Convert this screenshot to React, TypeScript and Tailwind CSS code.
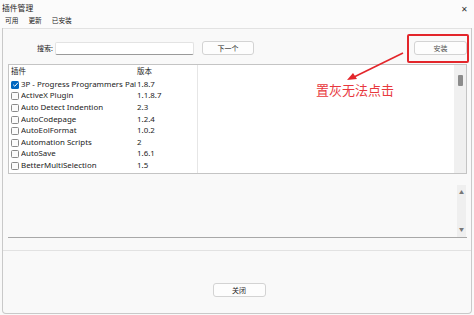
import React from "react";

const plugins: [string, string, boolean][] = [
  ["3P - Progress Programmers Pal", "1.8.7", true],
  ["ActiveX Plugin", "1.1.8.7", false],
  ["Auto Detect Indention", "2.3", false],
  ["AutoCodepage", "1.2.4", false],
  ["AutoEolFormat", "1.0.2", false],
  ["Automation Scripts", "2", false],
  ["AutoSave", "1.6.1", false],
  ["BetterMultiSelection", "1.5", false],
  ["BracketsCheck", "1.2.2", false],
];

function Check({ on }: { on: boolean }) {
  return on ? (
    <span className="block w-[8px] h-[8px] rounded-[1.5px] bg-[#0067c0] flex items-center justify-center shrink-0">
      <svg width="7" height="7" viewBox="0 0 8 8">
        <path d="M1.3 4.2 L3.2 6 L6.8 2" stroke="#fff" strokeWidth="1.1" fill="none" />
      </svg>
    </span>
  ) : (
    <span className="block w-[8px] h-[8px] rounded-[1.5px] border border-[#8a8a8a] bg-[#fbfbfb] shrink-0" />
  );
}

export default function App() {
  return (
    <div
      className="w-[474px] h-[315px] bg-[#f9f9f9] relative flex flex-col overflow-hidden text-[#1b1b1b]"
      style={{ fontFamily: '"Noto Sans","Noto Sans CJK SC",sans-serif' }}
    >
      {/* title bar */}
      <div className="h-[15px] flex items-center justify-between bg-[#fbfbfb]">
        <span className="ml-[2px] text-[7.8px] leading-none mt-[3px]">插件管理</span>
        <span className="mr-[6px] mt-[3px] text-[8px] leading-none text-[#333]">✕</span>
      </div>
      {/* tabs */}
      <div className="h-[13px] flex items-center text-[6.7px] leading-none bg-[#fbfbfb]">
        <span className="ml-[5px]">可用</span>
        <span className="ml-[10px]">更新</span>
        <span className="ml-[10px]">已安装</span>
      </div>
      {/* frame */}
      <div className="flex-1 mx-[2px] mb-[1px] border-l border-r border-b border-[#c9c9c9] rounded-b-[4px] flex flex-col">
        <div className="h-[223px] border-t border-b border-[#e2e2e2] flex flex-col">
          {/* search row */}
          <div className="mt-[12px] h-[14px] flex items-center">
            <span className="w-[50px] text-right text-[7px] leading-none">搜索:</span>
            <div className="ml-[2px] w-[139px] h-[13px] bg-white border border-[#e3e3e3] border-b-[#9a9a9a] rounded-[2px]" />
            <div className="ml-[8px] w-[52px] h-[14px] bg-[#fdfdfd] border border-[#d3d3d3] rounded-[3px] flex items-center justify-center text-[7px] leading-none">
              下一个
            </div>
            <div className="ml-auto mr-[4px] w-[53px] h-[14px] bg-[#fdfdfd] border border-[#d3d3d3] rounded-[3px] flex items-center justify-center text-[7px] leading-none text-[#555]">
              安装
            </div>
          </div>
          {/* list */}
          <div className="mt-[9px] ml-[5px] mr-[4px] h-[110px] border border-[#c4c4c4] bg-white flex overflow-hidden">
            <div className="w-[189px] border-r border-[#e6e6e6] flex flex-col overflow-hidden">
              <div className="h-[14px] shrink-0 flex items-start pt-[3px] text-[7.5px] leading-none">
                <span className="ml-[2px] w-[126px]">插件</span>
                <span>版本</span>
              </div>
              {plugins.map(([name, ver, on]) => (
                <div key={name} className="h-[11.6px] flex items-center text-[7.9px] leading-none whitespace-nowrap shrink-0">
                  <span className="ml-[2px] shrink-0">
                    <Check on={on} />
                  </span>
                  <span className="ml-[2px] w-[116px] shrink-0 overflow-hidden">{name}</span>
                  <span>{ver}</span>
                </div>
              ))}
            </div>
            <div className="flex-1" />
            <div className="w-[12px] bg-[#f0f0f0] flex justify-center">
              <div className="mt-[10px] w-[5px] h-[11px] bg-[#8c8c8c] rounded-[1px]" />
            </div>
          </div>
          {/* description */}
          <div className="mt-[11px] ml-[5px] mr-[4px] h-[53px] border-b border-[#a8a8a8] flex">
            <div className="flex-1" />
            <div className="w-[9px] mr-[1px] bg-[#efefef] flex flex-col items-center justify-between py-[5px] text-[5px] leading-none text-[#777]">
              <span>▲</span>
              <span>▼</span>
            </div>
          </div>
        </div>
        {/* bottom */}
        <div className="flex-1 flex justify-center">
          <div className="mt-[32px] ml-[4px] w-[53px] h-[14px] bg-[#fdfdfd] border border-[#d3d3d3] rounded-[3px] flex items-center justify-center text-[7px] leading-none">
            关闭
          </div>
        </div>
      </div>

      {/* annotation overlays */}
      <div className="absolute left-[407px] top-[34px] w-[62px] h-[29px] border-2 border-[#e3262b] rounded-[2px]" />
      <svg className="absolute left-0 top-0" width="474" height="315">
        <line x1="403" y1="53" x2="354" y2="77" stroke="#e3262b" strokeWidth="1.6" />
        <polygon points="347,80 353,73 357,79" fill="#e3262b" />
      </svg>
      <div className="absolute left-[316px] top-[84px] text-[13px] leading-none text-[#e8383d] whitespace-nowrap">
        置灰无法点击
      </div>
    </div>
  );
}
